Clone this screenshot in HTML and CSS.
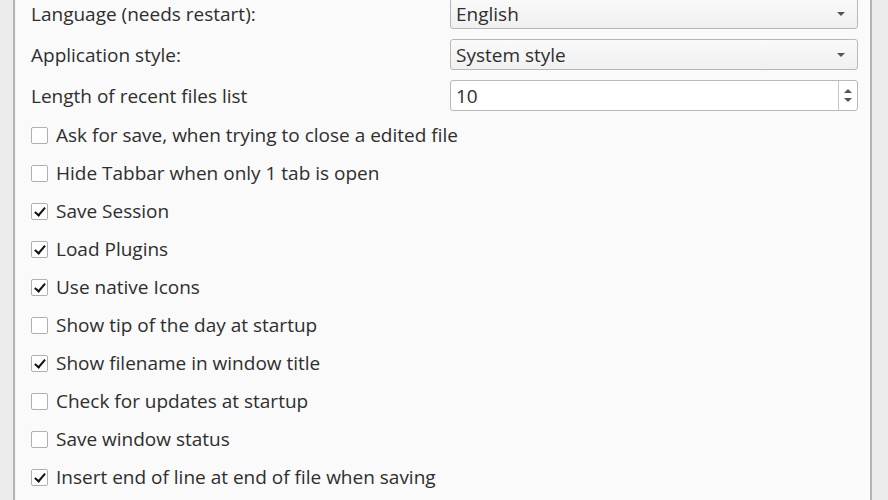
FILE: index.html
```html
<!DOCTYPE html>
<html>
<head>
<meta charset="utf-8">
<link rel="stylesheet" href="styles.css">
</head>
<body>
<div class="frame">
  <div class="strip left"></div>
  <div class="panel">
    <div class="form">
      <div class="row first">
        <div class="label">Language (needs restart):</div>
        <div class="combo"><span>English</span><span class="arrow"></span></div>
      </div>
      <div class="row">
        <div class="label">Application style:</div>
        <div class="combo"><span>System style</span><span class="arrow"></span></div>
      </div>
      <div class="row">
        <div class="label">Length of recent files list</div>
        <div class="spin"><span class="val">10</span><span class="btns"><span class="up"></span><span class="down"></span></span></div>
      </div>
    </div>
    <div class="checks">
      <div class="check"><span class="box"></span>Ask for save, when trying to close a edited file</div>
      <div class="check"><span class="box"></span>Hide Tabbar when only 1 tab is open</div>
      <div class="check"><span class="box on"></span>Save Session</div>
      <div class="check"><span class="box on"></span>Load Plugins</div>
      <div class="check"><span class="box on"></span>Use native Icons</div>
      <div class="check"><span class="box"></span>Show tip of the day at startup</div>
      <div class="check"><span class="box on"></span>Show filename in window title</div>
      <div class="check"><span class="box"></span>Check for updates at startup</div>
      <div class="check"><span class="box"></span>Save window status</div>
      <div class="check"><span class="box on"></span>Insert end of line at end of file when saving</div>
    </div>
  </div>
  <div class="strip right"></div>
</div>
</body>
</html>
```
FILE: styles.css
```css
html, body {
  margin: 0;
  padding: 0;
  background: #ececec;
}
body {
  font-family: "Open Sans", "DejaVu Sans", sans-serif;
  font-size: 19px;
  color: #2e2e2e;
  width: 888px;
  height: 500px;
  overflow: hidden;
}
.frame {
  display: flex;
  height: 500px;
}
.strip {
  background: #ececec;
}
.strip.left {
  width: 13px;
  border-right: 2px solid #b4b4b4;
}
.strip.right {
  flex: 1;
  border-left: 2px solid #b4b4b4;
}
.panel {
  width: 855px;
  background: #fafafa;
  border-left: 1px solid #f4f4f4;
  box-sizing: border-box;
  padding: 0 12px 0 15px;
}
.form {
  display: flex;
  flex-direction: column;
  gap: 10px;
  margin-top: -2px;
}
.row {
  display: flex;
  align-items: center;
  height: 31px;
}
.label {
  flex: 0 0 419px;
}
.combo, .spin {
  flex: 1;
  height: 31px;
  box-sizing: border-box;
  border: 1px solid #b8b8b8;
  border-radius: 3px;
  display: flex;
  align-items: center;
  padding-left: 5px;
}
.combo {
  background: linear-gradient(#fafafa, #f0f0f0);
  justify-content: space-between;
  padding-right: 12px;
}
.arrow {
  width: 0;
  height: 0;
  border-left: 4px solid transparent;
  border-right: 4px solid transparent;
  border-top: 4px solid #555;
}
.spin {
  background: #fff;
  justify-content: space-between;
  padding-right: 0;
}
.btns {
  width: 18px;
  height: 100%;
  border-left: 1px solid #c8c8c8;
  display: flex;
  flex-direction: column;
  align-items: center;
  justify-content: center;
  gap: 5px;
}
.up {
  border-left: 4px solid transparent;
  border-right: 4px solid transparent;
  border-bottom: 4px solid #555;
}
.down {
  border-left: 4px solid transparent;
  border-right: 4px solid transparent;
  border-top: 4px solid #555;
}
.checks {
  display: flex;
  flex-direction: column;
  margin-top: 5px;
}
.check {
  height: 38px;
  display: flex;
  align-items: center;
}
.box {
  width: 17px;
  height: 17px;
  box-sizing: border-box;
  border: 1px solid #b0b0b0;
  border-radius: 2px;
  background: #fff;
  margin-right: 8px;
  position: relative;
}
.box.on::after {
  content: "";
  position: absolute;
  left: 5px;
  top: 1px;
  width: 4px;
  height: 9px;
  border: solid #111;
  border-width: 0 2px 2px 0;
  transform: rotate(40deg);
}
```
